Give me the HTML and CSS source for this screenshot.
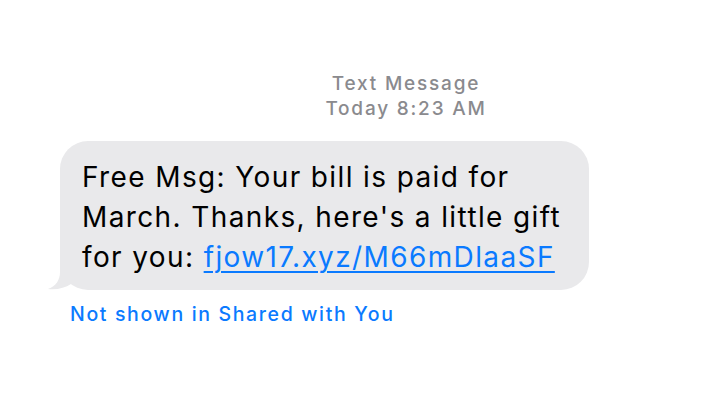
FILE: index.html
```html
<!DOCTYPE html>
<html lang="en">
<head>
<meta charset="utf-8">
<title>Text Message</title>
<link rel="stylesheet" href="styles.css">
</head>
<body>
<main class="thread">
  <header class="meta">
    <div class="meta-title">Text Message</div>
    <div class="meta-time">Today 8:23 AM</div>
  </header>
  <section class="message">
    <div class="bubble">
      <p class="bubble-text">Free Msg: Your bill is paid for<br>March. Thanks, here's a little gift<br>for you: <a class="link" href="#">fjow17.xyz/M66mDlaaSF</a></p>
      <svg class="tail" width="34" height="30" viewBox="0 0 34 30" aria-hidden="true">
        <path d="M13 0 L13 12 C13 20 9 26 1 29 C10 30 18 28 24 24 L34 24 L34 0 Z" fill="#e9e9eb"/>
      </svg>
    </div>
    <div class="note">Not shown in Shared with You</div>
  </section>
</main>
</body>
</html>
```
FILE: styles.css
```css
html, body {
  margin: 0;
  padding: 0;
  background: #ffffff;
}

body {
  width: 720px;
  height: 405px;
  overflow: hidden;
  font-family: Inter, "Liberation Sans", sans-serif;
}

.thread {
  display: flex;
  flex-direction: column;
  padding-top: 71px;
}

.meta {
  padding-left: 92px;
  text-align: center;
  color: #8a8a8e;
  font-size: 19px;
  line-height: 25px;
  font-weight: 500;
  letter-spacing: 1.8px;
}

.message {
  display: flex;
  flex-direction: column;
  align-items: flex-start;
  padding-left: 60px;
  margin-top: 20px;
}

.bubble {
  position: relative;
  width: 529px;
  box-sizing: border-box;
  background: #e9e9eb;
  border-radius: 28px;
  padding: 16px 12px 13px 22px;
}

.bubble-text {
  position: relative;
  z-index: 1;
  margin: 0;
  font-size: 28px;
  line-height: 40px;
  letter-spacing: 1.38px;
  color: #000000;
  white-space: nowrap;
}

.link {
  color: #0a7aff;
  text-decoration: underline;
  text-decoration-thickness: 2px;
  text-underline-offset: 4px;
}

.tail {
  position: absolute;
  left: -13px;
  bottom: 0;
}

.note {
  margin-top: 11px;
  margin-left: 10px;
  color: #0a7aff;
  font-size: 19.5px;
  line-height: 26px;
  font-weight: 500;
  letter-spacing: 1.65px;
}
```
